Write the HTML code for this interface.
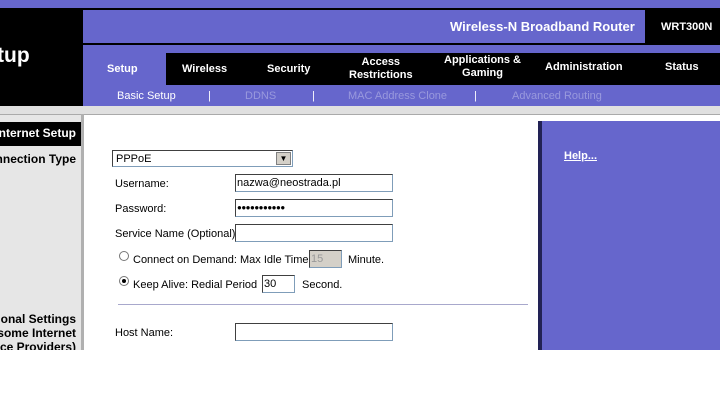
<!DOCTYPE html>
<html><head><style>
*{margin:0;padding:0;box-sizing:border-box}
body{width:720px;height:400px;background:#fff;position:relative;overflow:hidden;font-family:"Liberation Sans",Arial,sans-serif}
.a{position:absolute}
.b{font-weight:bold;color:#fff;font-size:11px;text-align:center;line-height:13px}
.l{font-size:11px;color:#000}
.in{position:absolute;height:18px;border:1px solid #7f9db9;border-top-color:#404040;border-left-color:#404040;background:#fff;font-size:11px;padding:2px 1px;line-height:12px}
.clip{position:absolute;left:0;top:0;overflow:hidden}
</style></head><body>
<div class="a" style="left:0;top:0;width:720px;height:8px;background:#6666cc"></div>
<div class="a" style="left:0;top:8px;width:720px;height:2px;background:#000"></div>
<div class="a" style="left:0;top:10px;width:83px;height:96px;background:#000"></div>
<div class="clip" style="top:44px;width:83px;height:30px"><div class="a" style="left:-3px;top:0;color:#fff;font-weight:bold;font-size:21px">tup</div></div>
<div class="a" style="left:83px;top:10px;width:637px;height:33px;background:#6666cc"></div>
<div class="a" style="left:645px;top:10px;width:75px;height:33px;background:#000"></div>
<div class="a b" style="left:450px;top:19px;font-size:13px;line-height:16px">Wireless-N Broadband Router</div>
<div class="a b" style="left:661px;top:21px;font-size:11px">WRT300N</div>
<div class="a" style="left:83px;top:43px;width:637px;height:2px;background:#000"></div>
<div class="a" style="left:83px;top:45px;width:637px;height:61px;background:#6666cc"></div>
<div class="a" style="left:166px;top:53px;width:554px;height:32px;background:#000"></div>
<div class="a b" style="left:107px;top:63px">Setup</div>
<div class="a b" style="left:182px;top:63px">Wireless</div>
<div class="a b" style="left:267px;top:63px">Security</div>
<div class="a b" style="left:349px;top:56px">Access<br>Restrictions</div>
<div class="a b" style="left:444px;top:54px">Applications &amp;<br>Gaming</div>
<div class="a b" style="left:545px;top:61px">Administration</div>
<div class="a b" style="left:665px;top:61px">Status</div>
<div class="a" style="left:117px;top:90px;font-size:11px;color:#fff">Basic Setup</div>
<div class="a" style="left:208px;top:90px;font-size:11px;color:#fff">|</div>
<div class="a" style="left:245px;top:90px;font-size:11px;color:#9999dd">DDNS</div>
<div class="a" style="left:312px;top:90px;font-size:11px;color:#fff">|</div>
<div class="a" style="left:348px;top:90px;font-size:11px;color:#9999dd">MAC Address Clone</div>
<div class="a" style="left:474px;top:90px;font-size:11px;color:#fff">|</div>
<div class="a" style="left:512px;top:90px;font-size:11px;color:#9999dd">Advanced Routing</div>
<div class="a" style="left:0;top:106px;width:720px;height:9px;background:#e0e0e0;border-bottom:1px solid #aaa"></div>
<div class="a" style="left:0;top:115px;width:81px;height:235px;background:#e6e6e6"></div>
<div class="a" style="left:81px;top:114px;width:3px;height:236px;background:#b0b0b0"></div>
<div class="a" style="left:0;top:122px;width:81px;height:24px;background:#000"></div>
<div class="clip" style="top:115px;width:81px;height:235px">
<div class="a" style="right:5px;top:11px;font-size:12px;font-weight:bold;color:#fff;white-space:nowrap">Internet Setup</div>
<div class="a" style="right:5px;top:37px;font-size:12px;font-weight:bold;white-space:nowrap">Connection Type</div>
<div class="a" style="right:5px;top:197px;font-size:12px;font-weight:bold;white-space:nowrap;text-align:right;line-height:14px">Optional Settings<br>(required by some Internet<br>Service Providers)</div>
</div>
<div class="a" style="left:538px;top:121px;width:182px;height:229px;background:#6666cc;border-left:4px solid #222255"></div>
<div class="a" style="left:564px;top:150px;font-size:11px;font-weight:bold;color:#fff;text-decoration:underline">Help...</div>
<div class="in" style="left:112px;top:150px;width:181px;height:17px;padding-left:3px">PPPoE</div>
<div class="a" style="left:276px;top:152px;width:15px;height:13px;background:#d4d0c8;border:1px solid #808080;font-size:8px;text-align:center;line-height:12px">&#9660;</div>
<div class="a l" style="left:115px;top:178px">Username:</div>
<div class="in" style="left:235px;top:174px;width:158px">nazwa@neostrada.pl</div>
<div class="a l" style="left:115px;top:203px">Password:</div>
<div class="in" style="left:235px;top:199px;width:158px;font-size:8px;letter-spacing:-0.5px">●●●●●●●●●●●</div>
<div class="a l" style="left:115px;top:228px">Service Name (Optional):</div>
<div class="in" style="left:235px;top:224px;width:158px"></div>
<div class="a" style="left:119px;top:251px;width:10px;height:10px;border-radius:50%;border:1px solid #777;background:#fff"></div>
<div class="a l" style="left:133px;top:254px">Connect on Demand: Max Idle Time</div>
<div class="in" style="left:309px;top:250px;width:33px;background:#d4d0c8;color:#999">15</div>
<div class="a l" style="left:348px;top:254px">Minute.</div>
<div class="a" style="left:119px;top:276px;width:10px;height:10px;border-radius:50%;border:1px solid #777;background:#fff"></div>
<div class="a" style="left:122px;top:279px;width:4px;height:4px;border-radius:50%;background:#000"></div>
<div class="a l" style="left:133px;top:279px">Keep Alive: Redial Period</div>
<div class="in" style="left:262px;top:275px;width:33px">30</div>
<div class="a l" style="left:302px;top:279px">Second.</div>
<div class="a" style="left:118px;top:304px;width:410px;height:1px;background:#a8a8cc"></div>
<div class="a l" style="left:115px;top:327px">Host Name:</div>
<div class="in" style="left:235px;top:323px;width:158px"></div>
<div class="a" style="left:0;top:350px;width:720px;height:50px;background:#fff"></div>
</body></html>
